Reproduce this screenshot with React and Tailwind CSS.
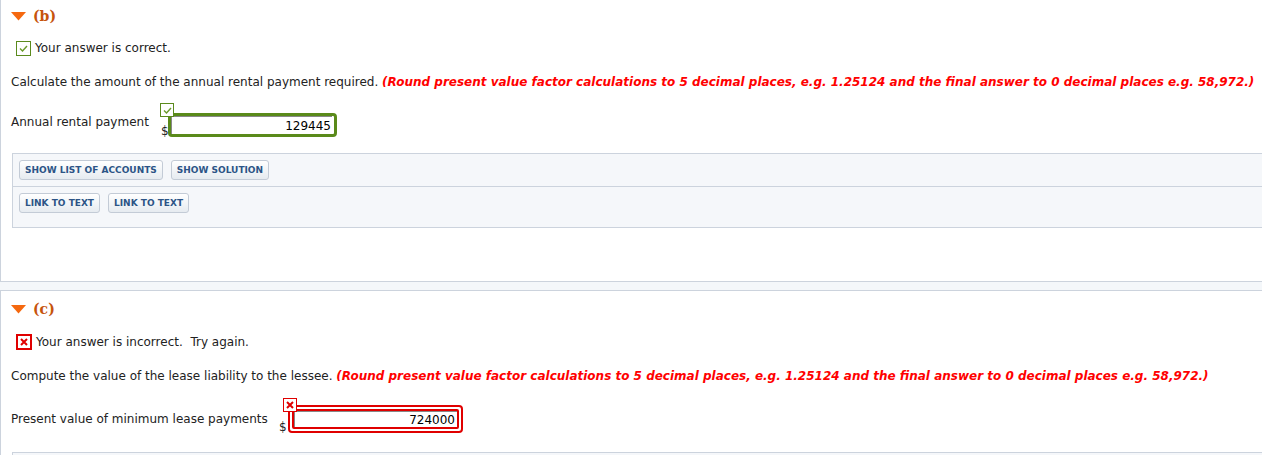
import React from "react";

const Caret = () => (
  <svg width="15" height="9" viewBox="0 0 15 9" className="shrink-0">
    <polygon points="0,0 15,0 7.5,8.5" fill="#f5680f" />
  </svg>
);

const Check = ({ size = 14 }) => (
  <span
    className="inline-flex items-center justify-center border border-[#5b8a1d] bg-white"
    style={{ width: size, height: size }}
  >
    <svg width="9" height="7" viewBox="0 0 9 7">
      <polyline points="1,3.5 3.5,6 8,1" fill="none" stroke="#6a9a2a" strokeWidth="1.4" />
    </svg>
  </span>
);

const Cross = ({ size = 16, thick = 2 }) => (
  <span
    className="inline-flex items-center justify-center bg-white"
    style={{ width: size, height: size, border: `${thick}px solid #e00000` }}
  >
    <svg width="8" height="8" viewBox="0 0 8 8">
      <path d="M1 1 L7 7 M7 1 L1 7" stroke="#e00000" strokeWidth="2" />
    </svg>
  </span>
);

const Btn = ({ children }) => (
  <button className="h-[20px] px-[5px] rounded-[3px] border border-[#c3cbd6] bg-gradient-to-b from-white to-[#e6ebf0] text-[9px] font-bold text-[#2c5486] leading-none">
    {children}
  </button>
);

const Note = ({ children }) => (
  <span className="font-bold italic text-[#ff0000]">{children}</span>
);

export default function App() {
  return (
    <div
      className="w-[1262px] h-[455px] overflow-hidden bg-[#f4f7fa] text-[13px] text-[#222]"
      style={{ fontFamily: '"DejaVu Sans", Verdana, sans-serif' }}
    >
      {/* part b */}
      <section className="h-[282px] bg-white border-l border-b border-[#ccd3dd] pl-[10px]">
        <div className="flex items-center gap-[7px] h-[31px] pt-[1px]">
          <Caret />
          <span
            className="font-bold text-[14px] text-[#c6540c]"
            style={{ fontFamily: '"DejaVu Serif", Georgia, serif' }}
          >
            (b)
          </span>
        </div>
        <div className="flex items-center gap-[4px] h-[34px] pl-[5px]">
          <Check size={15} />
          <span className="text-[12px]">Your answer is correct.</span>
        </div>
        <p className="text-[12px] h-[34px] flex items-center">
          Calculate the amount of the annual rental payment required.&nbsp;
          <Note>
            (Round present value factor calculations to 5 decimal places, e.g. 1.25124 and the final answer to 0 decimal places e.g. 58,972.)
          </Note>
        </p>
        <div className="flex items-start h-[41px] pt-[4px]">
          <span className="text-[12px] mt-[10px] w-[149px]">Annual rental payment</span>
          <div className="relative w-[180px] h-[34px]">
            <div className="absolute left-0 top-0 z-10 flex">
              <Check size={14} />
            </div>
            <span className="absolute left-[1px] top-[22px] text-[12px] leading-none">$</span>
            <div className="absolute left-[8px] top-[10px] w-[169px] h-[24px] rounded-[4px] border-[3px] border-[#5a8a1a] bg-white flex items-center justify-end pr-[2px]">
              <span className="text-[12px] text-[#000] border-l border-t border-[#888] w-full h-full text-right pr-[1px] leading-[18px]">
                129445
              </span>
            </div>
          </div>
        </div>
        <div className="mt-[13px] ml-[1px] h-[75px] bg-[#f5f7fa] border-y border-l border-[#ccd3dd]">
          <div className="flex gap-[8px] pl-[6px] h-[33px] items-center border-b border-[#ccd3dd]">
            <Btn>SHOW LIST OF ACCOUNTS</Btn>
            <Btn>SHOW SOLUTION</Btn>
          </div>
          <div className="flex gap-[8px] pl-[6px] pt-[6px]">
            <Btn>LINK TO TEXT</Btn>
            <Btn>LINK TO TEXT</Btn>
          </div>
        </div>
      </section>

      {/* part c */}
      <section className="mt-[8px] h-[200px] bg-white border-l border-t border-[#ccd3dd] pl-[10px]">
        <div className="flex items-center gap-[7px] h-[34px] pt-[2px]">
          <Caret />
          <span
            className="font-bold text-[14px] text-[#c6540c]"
            style={{ fontFamily: '"DejaVu Serif", Georgia, serif' }}
          >
            (c)
          </span>
        </div>
        <div className="flex items-center gap-[4px] h-[34px] pl-[5px]">
          <Cross size={16} />
          <span className="text-[12px] whitespace-pre">Your answer is incorrect.  Try again.</span>
        </div>
        <p className="text-[12px] h-[34px] flex items-center">
          Compute the value of the lease liability to the lessee.&nbsp;
          <Note>
            (Round present value factor calculations to 5 decimal places, e.g. 1.25124 and the final answer to 0 decimal places e.g. 58,972.)
          </Note>
        </p>
        <div className="flex items-start h-[44px] pt-[7px]">
          <span className="text-[12px] mt-[10px] w-[268px]">Present value of minimum lease payments</span>
          <div className="relative w-[200px] h-[36px]">
            <div className="absolute left-[4px] top-[-2px] z-10 flex">
              <Cross size={14} thick={1} />
            </div>
            <span className="absolute left-0 top-[21px] text-[12px] leading-none">$</span>
            <div className="absolute left-[9px] top-[5px] w-[175px] h-[28px] rounded-[4px] border-[2px] border-[#e00000] bg-white p-[2px]">
              <div className="w-full h-full rounded-[2px] border-[2px] border-[#e00000]">
                <span className="block text-[12px] text-[#000] border-l border-t border-[#888] h-full text-right pr-[2px] leading-[17px]">
                  724000
                </span>
              </div>
            </div>
          </div>
        </div>
        <div className="mt-[15px] ml-[1px] h-[40px] bg-[#f5f7fa] border-t border-l border-[#ccd3dd]" />
      </section>
    </div>
  );
}
